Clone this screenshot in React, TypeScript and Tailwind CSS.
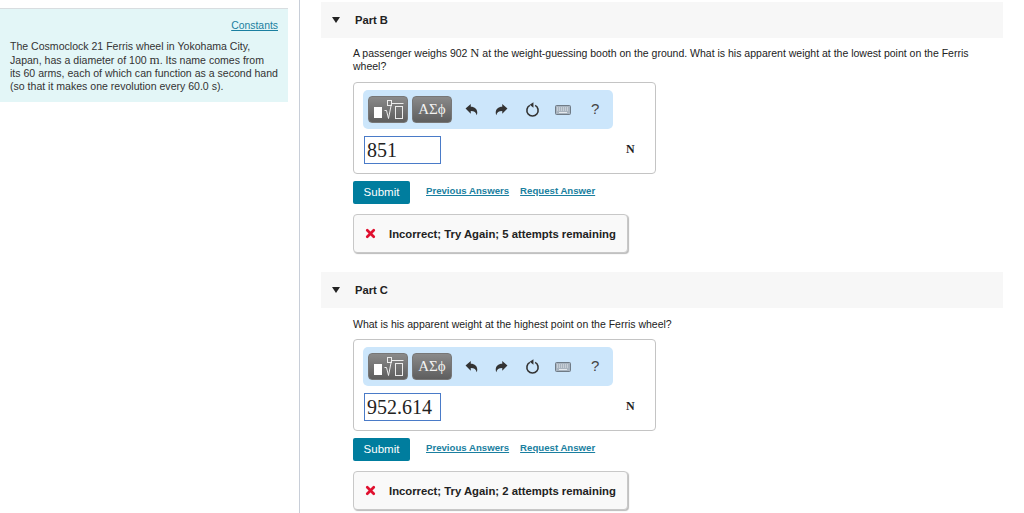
import { X } from "lucide-react";

const sans = "font-['Liberation_Sans',Arial,sans-serif]";
const serif = "font-['Liberation_Serif','Times_New_Roman',serif]";

const Undo = ({ flip }: { flip?: boolean }) => (
  <svg viewBox="0 0 14 14" className={`w-[13px] h-[13px] ${flip ? "-scale-x-100" : ""}`}>
    <path d="M0.6 5.8 6.2 1v3c4.4 0 7 2.6 7 6.6 0 1-.2 2-.6 2.6-.6-3-2.4-4.6-6.4-4.6v2.9z" fill="#333" />
  </svg>
);

const Reset = () => (
  <svg viewBox="0 0 16 16" className="w-[15px] h-[15px]" fill="none">
    <path d="M5.2 3.6a6 6 0 1 0 5.6 0" stroke="#333" strokeWidth="1.7" />
    <path d="M9 0.2v5.8L5 3z" fill="#333" />
  </svg>
);

const Keyboard = () => (
  <svg viewBox="0 0 16 10" className="w-[16px] h-[10px]">
    <rect x="0.5" y="0.5" width="15" height="9" rx="1" fill="#a9b4bf" stroke="#6f7b86" />
    <path d="M2 3h12M2 5h12" stroke="#e4e8ec" strokeWidth="1" strokeDasharray="1 1" />
    <path d="M4 7.5h8" stroke="#e4e8ec" strokeWidth="1" />
  </svg>
);

const Toolbar = () => (
  <div className="flex items-center w-[250px] h-[39px] bg-[#cce6fb] rounded-[5px] pl-[5px]">
    <div className="flex items-center gap-[2px] pl-[5px] w-[40px] h-[27px] rounded-[4px] border border-[#777] bg-gradient-to-b from-[#8a8a8a] to-[#5e5e5e]">
      <div className="w-[8px] h-[11px] bg-white mt-[5px]" />
      <svg viewBox="0 0 20 20" className="w-[20px] h-[20px]" fill="none" stroke="#ececec" strokeWidth="1">
        <rect x="3.5" y="0.5" width="4" height="5" />
        <path d="M0.5 10.5h2l2 8 3-15h12" />
        <rect x="11.5" y="6.5" width="7" height="12" />
      </svg>
    </div>
    <div className={`flex items-center justify-center ml-[4px] w-[40px] h-[27px] rounded-[4px] border border-[#777] bg-gradient-to-b from-[#8a8a8a] to-[#5e5e5e] text-[#f2f2f2] text-[15px] ${serif}`}>
      ΑΣϕ
    </div>
    <div className="flex items-center ml-[13px] gap-[17px]">
      <Undo />
      <Undo flip />
    </div>
    <div className="ml-[17px] flex"><Reset /></div>
    <div className="ml-[15px] flex"><Keyboard /></div>
    <span className={`ml-[20px] text-[15px] text-[#444] ${sans}`}>?</span>
  </div>
);

const Part = ({ name, question, value, attempts }: { name: string; question: React.ReactNode; value: string; attempts: number }) => (
  <section>
    <div className="flex items-center h-[36px] bg-[#f7f7f7] pl-[11px]">
      <span className="w-0 h-0 border-x-[4px] border-x-transparent border-t-[6px] border-t-[#222]" />
      <h2 className="ml-[15px] text-[11.2px] font-bold text-[#222]">{name}</h2>
    </div>
    <div className="pl-[32px]">
      {question}
      <div className="w-[303px] h-[92px] border border-[#c4c4c4] rounded-[4px] pt-[7px] pl-[9px]">
        <Toolbar />
        <div className="flex items-center mt-[7px] ml-[1px]">
          <div className={`w-[77px] h-[28px] border border-[#4a7bc8] pl-[2px] text-[20px] leading-[27px] text-[#222] ${serif}`}>{value}</div>
          <span className={`ml-[185px] mb-[2px] text-[12px] font-bold text-[#222] ${serif}`}>N</span>
        </div>
      </div>
      <div className="flex items-center mt-[7px]">
        <button className="w-[57px] h-[23px] bg-[#007d9e] rounded-[2px] text-white text-[11.5px]">Submit</button>
        <a className="ml-[16px] mb-[2px] text-[9.65px] font-bold text-[#1a7fa0] underline">Previous Answers</a>
        <a className="ml-[11px] mb-[2px] text-[9.65px] font-bold text-[#1a7fa0] underline">Request Answer</a>
      </div>
      <div className="flex items-center mt-[10px] w-[275px] h-[39px] bg-[#f9f9f9] border border-[#c8c8c8] rounded-[4px] shadow-[1px_1px_1px_#bbb] pl-[10px]">
        <X className="w-[13px] h-[13px] text-[#e0102f]" strokeWidth={5} />
        <span className="ml-[12px] pt-[1px] text-[11.3px] font-bold text-[#222]">Incorrect; Try Again; {attempts} attempts remaining</span>
      </div>
    </div>
  </section>
);

export default function App() {
  return (
    <div className={`flex w-[1024px] h-[513px] overflow-hidden bg-white ${sans}`}>
      <aside className="w-[300px] border-r border-[#c8ced8] pt-[8px] pr-[11px] shrink-0">
        <div className="h-[94px] bg-[#e3f6f7] border-t border-[#d8dde0] pl-[10px] pr-[10px] pt-[10px]">
          <div className="text-right text-[10.4px] text-[#1a7fa0] underline leading-[13px]">Constants</div>
          <p className="mt-[8px] text-[10.55px] leading-[13px] text-[#333] whitespace-nowrap">
            The Cosmoclock 21 Ferris wheel in Yokohama City,
            <br />
            Japan, has a diameter of 100 <span className={`${serif} text-[13px]`}>m</span>. Its name comes from
            <br />
            its 60 arms, each of which can function as a second hand
            <br />
            (so that it makes one revolution every 60.0 s).
          </p>
        </div>
      </aside>
      <main className="w-[682px] ml-[21px] pt-[2px] shrink-0 flex flex-col gap-[19px]">
        <Part
          name="Part B"
          value="851"
          attempts={5}
          question={
            <p className="pt-[9px] mb-[9px] text-[10.5px] leading-[13px] text-[#222]">
              A passenger weighs 902 <span className={`${serif} text-[12.5px] leading-[13px]`}>N</span> at the weight-guessing booth on the ground. What is his apparent weight at the lowest point on the Ferris wheel?
            </p>
          }
        />
        <Part
          name="Part C"
          value="952.614"
          attempts={2}
          question={<p className="pt-[10px] mb-[8px] text-[10.5px] leading-[13px] text-[#222]">What is his apparent weight at the highest point on the Ferris wheel?</p>}
        />
      </main>
    </div>
  );
}
